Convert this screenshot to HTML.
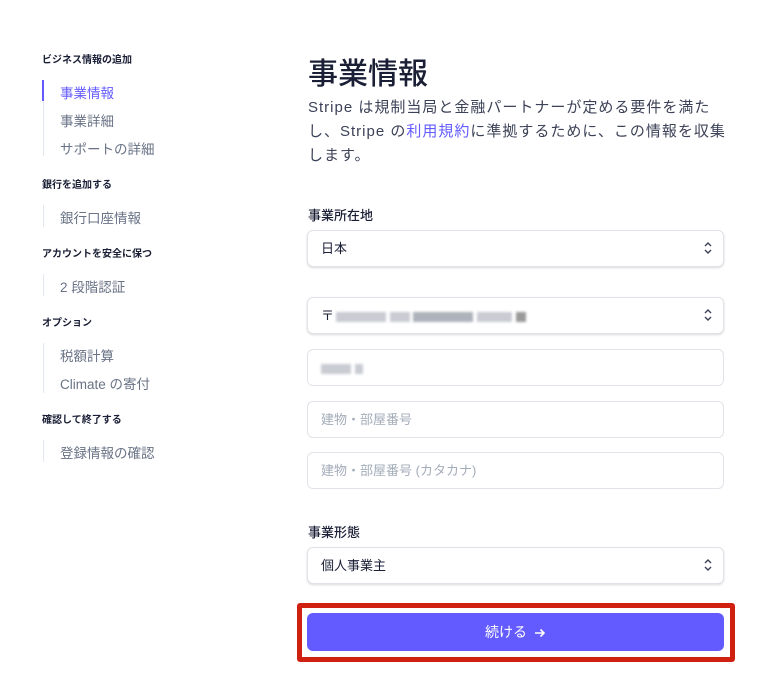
<!DOCTYPE html>
<html><head><meta charset="utf-8"><style>
*{margin:0;padding:0;box-sizing:border-box}
body{width:768px;height:677px;background:#fff;font-family:"Liberation Sans","Noto Sans CJK JP",sans-serif;position:relative;overflow:hidden;color:#1a1f36}
.a{position:absolute}
.h{font-size:10px;font-weight:bold;color:#1a1f36;left:42px}
.i{font-size:13.5px;color:#697386;left:60px}
.bar{left:43px;width:1px;background:#e3e8ee}
.box{position:absolute;left:307px;width:417px;height:37px;border:1px solid #e0e3e8;border-radius:6px;background:#fff;font-size:13px;padding-left:13px;line-height:35px}
.sel{box-shadow:0 1px 2px rgba(0,0,0,.15)}
.ph{color:#a3acb9}
.chev{position:absolute;right:10px;top:10px}
.lab{font-size:13px;font-weight:500;left:308px;color:#1a1f36}
.blur{display:inline-block;height:10px;background:#c9ccd3;filter:blur(1.2px);vertical-align:middle}
</style></head><body>
<div class="a h" style="top:51px">ビジネス情報の追加</div>
<div class="a bar" style="top:80px;height:76px"></div>
<div class="a" style="left:42px;top:80px;width:2px;height:21px;background:#635bff"></div>
<div class="a i" style="top:82px;color:#635bff">事業情報</div>
<div class="a i" style="top:110px">事業詳細</div>
<div class="a i" style="top:138px">サポートの詳細</div>
<div class="a h" style="top:176px">銀行を追加する</div>
<div class="a bar" style="top:205px;height:22px"></div>
<div class="a i" style="top:207px">銀行口座情報</div>
<div class="a h" style="top:245px">アカウントを安全に保つ</div>
<div class="a bar" style="top:274px;height:22px"></div>
<div class="a i" style="top:276px">2 段階認証</div>
<div class="a h" style="top:314px">オプション</div>
<div class="a bar" style="top:343px;height:50px"></div>
<div class="a i" style="top:345px">税額計算</div>
<div class="a i" style="top:373px">Climate の寄付</div>
<div class="a h" style="top:411px">確認して終了する</div>
<div class="a bar" style="top:440px;height:22px"></div>
<div class="a i" style="top:442px">登録情報の確認</div>

<div class="a" style="left:308px;top:49px;font-size:30px;font-weight:500">事業情報</div>
<div class="a" style="left:308px;top:96px;width:440px;font-size:15px;line-height:24px;color:#3c4257;letter-spacing:1px">Stripe は規制当局と金融パートナーが定める要件を満た<br>し、Stripe の<span style="color:#635bff">利用規約</span>に準拠するために、この情報を収集<br>します。</div>

<div class="a lab" style="top:205px">事業所在地</div>
<div class="box sel" style="top:230px">日本<svg class="chev" width="10" height="14" viewBox="0 0 10 14"><path d="M2 5l3-3 3 3M2 9l3 3 3-3" fill="none" stroke="#3c4257" stroke-width="1.4"/></svg></div>
<div class="box sel" style="top:297px">〒<span class="blur" style="width:50px;margin-left:2px"></span> <span class="blur" style="width:20px"></span> <span class="blur" style="width:60px;background:#aeb2ba"></span> <span class="blur" style="width:35px"></span> <span class="blur" style="width:10px;background:#999"></span><svg class="chev" width="10" height="14" viewBox="0 0 10 14"><path d="M2 5l3-3 3 3M2 9l3 3 3-3" fill="none" stroke="#3c4257" stroke-width="1.4"/></svg></div>
<div class="box" style="top:349px"><span class="blur" style="width:30px"></span> <span class="blur" style="width:8px"></span></div>
<div class="box ph" style="top:401px">建物・部屋番号</div>
<div class="box ph" style="top:452px">建物・部屋番号 (カタカナ)</div>

<div class="a lab" style="top:522px">事業形態</div>
<div class="box sel" style="top:547px">個人事業主<svg class="chev" width="10" height="14" viewBox="0 0 10 14"><path d="M2 5l3-3 3 3M2 9l3 3 3-3" fill="none" stroke="#3c4257" stroke-width="1.4"/></svg></div>

<div class="a" style="left:297px;top:603px;width:438px;height:59px;border:5px solid #d0200f;border-radius:3px"></div>
<div class="a" style="left:307px;top:613px;width:417px;height:38px;background:#635bff;border-radius:6px;color:#fff;font-size:14px;text-align:center;line-height:38px">続ける <svg width="12" height="10" viewBox="0 0 12 10" style="vertical-align:-1px;margin-left:3px"><path d="M1 5h9M6.5 1.5L10 5 6.5 8.5" fill="none" stroke="#fff" stroke-width="1.6"/></svg></div>
</body></html>
